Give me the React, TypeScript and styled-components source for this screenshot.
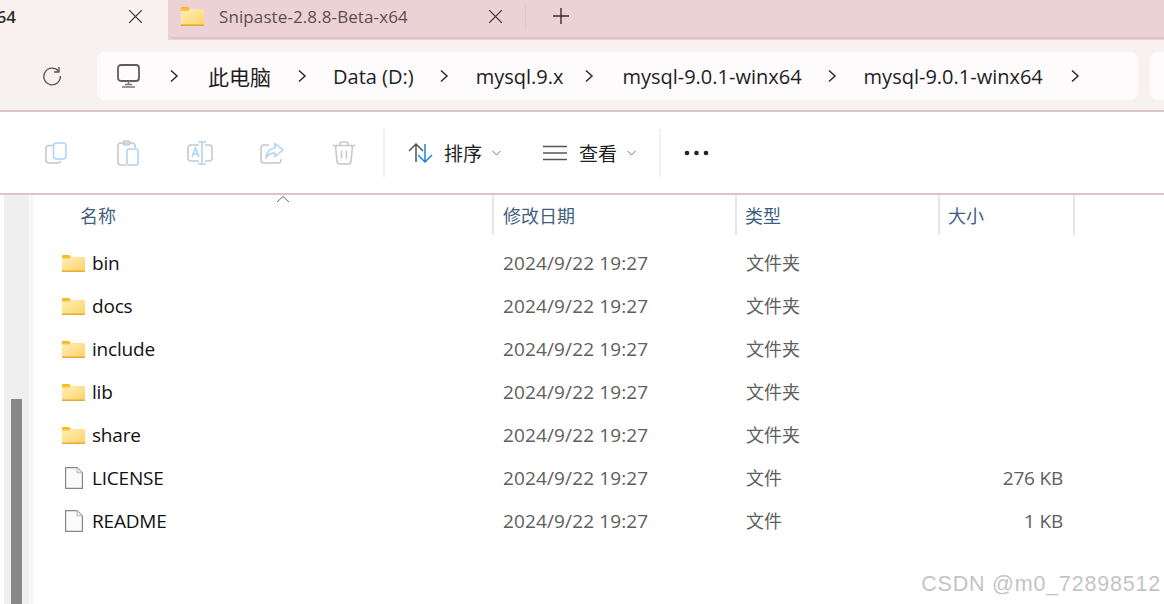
import React from "react";
import styled, { createGlobalStyle } from "styled-components";

const Global = createGlobalStyle`
  html, body { margin: 0; padding: 0; background: #fff; }
  #root { width: 1164px; height: 604px; overflow: hidden; }
`;
const FONT = `"Open Sans", "Noto Sans", "Noto Sans CJK SC", sans-serif`;

const Page = styled.div`
  position: relative; width: 1164px; height: 604px; overflow: hidden;
  display: flex; flex-direction: column; font-family: ${FONT}; color: #1c1c1c;
`;
const TabStrip = styled.div`
  display: flex; height: 40px; flex: none; background: #ecd2d4;
`;
const ActiveTab = styled.div`
  width: 168px; flex: none; background: #f9f2f1; display: flex; align-items: center;
  justify-content: space-between; padding: 0 25px 8px 0; box-sizing: border-box; overflow: hidden;
`;
const ClippedTitle = styled.span`
  font-size: 17px; font-weight: 600; width: 16px; overflow: hidden; direction: rtl; color: #2a2a2a;
`;
const IdleTab = styled.div`
  width: 357px; flex: none; height: 39px; box-sizing: border-box; background: #ecd2d4;
  border-bottom: 2px solid #dfc6c7; border-bottom-left-radius: 6px; display: flex; align-items: center;
  padding: 0 22px 5px 13px; gap: 15px;
`;
const TabTitle = styled.span`
  font-size: 17px; letter-spacing: 0.1px; color: #5b4e50; flex: 1; white-space: nowrap;
`;
const StripRest = styled.div`
  flex: 1; height: 39px; box-sizing: border-box; border-bottom: 2px solid #dfc6c7; display: flex; align-items: flex-start;
`;
const StripDivider = styled.div`
  width: 1px; height: 23px; margin-top: 5px; background: #e0c8ca; margin-right: 27px;
`;
const AddressRow = styled.div`
  height: 72px; flex: none; box-sizing: border-box; background: #f7f2f1; border-bottom: 2px solid #dcc6c4;
  display: flex; align-items: flex-start; padding: 12px 0 0 40px;
`;
const RefreshSlot = styled.div`
  width: 57px; height: 48px; flex: none; display: flex; align-items: center; padding-left: 2px; box-sizing: border-box;
`;
const AddressBox = styled.div`
  width: 1041px; height: 48px; flex: none; background: #fdfbfb; border-radius: 7px;
  display: flex; align-items: center; padding-left: 20px; box-sizing: border-box;
`;
const SearchBox = styled.div`
  width: 40px; height: 48px; margin-left: 12px; background: #fdfbfb; border-radius: 7px 0 0 7px; flex: none;
`;
const Crumb = styled.span<{ $cjk?: boolean }>`
  font-size: ${p => (p.$cjk ? 21 : 20)}px; color: #1e1e1e; white-space: nowrap;
`;
const ChevronSlot = styled.span<{ $l: number; $r: number }>`
  display: inline-flex; margin: 0 ${p => p.$r}px 0 ${p => p.$l}px; flex: none;
`;
const Toolbar = styled.div`
  height: 83px; flex: none; box-sizing: border-box; background: #fff; border-bottom: 2px solid #dcc6c4;
  display: flex; align-items: flex-start; padding: 17px 0 0 20px;
`;
const ToolIcon = styled.div`
  width: 72px; height: 48px; flex: none; display: flex; align-items: center; justify-content: center;
`;
const ToolDivider = styled.div<{ $l?: number }>`
  width: 2px; height: 48px; background: #f0f0f0; flex: none; margin-left: ${p => p.$l ?? 0}px;
`;
const ToolButton = styled.div<{ $w: number }>`
  width: ${p => p.$w}px; padding-left: 23px; box-sizing: border-box; height: 48px; flex: none;
  display: flex; align-items: center;
`;
const ToolLabel = styled.span<{ $l: number }>`
  font-size: 19px; color: #1e1e1e; margin: 0 10px 2px ${p => p.$l}px; white-space: nowrap; font-family: "Noto Sans CJK SC", sans-serif;
`;
const Body = styled.div`
  flex: 1; display: flex; min-height: 0;
`;
const Rail = styled.div`
  width: 25px; margin-left: 4px; flex: none; background: #efefef; position: relative; margin-right: 1px;
`;
const Thumb = styled.div`
  position: absolute; left: 7px; width: 11px; top: 204px; bottom: 0; background: #888;
`;
const RailEdge = styled.div`
  width: 3px; flex: none; background: #f6f6f6;
`;
const Main = styled.div`
  flex: 1; position: relative; background: #fff;
`;
const Grid = "461px 243px 203px 135px";
const HeaderRow = styled.div`
  display: grid; grid-template-columns: ${Grid}; height: 40px; position: relative;
`;
const HeadCell = styled.div<{ $pad: number }>`
  padding-left: ${p => p.$pad}px; box-sizing: border-box; display: flex; align-items: center;
  font-size: 18px; color: #3f5f80; border-right: 2px solid #e6e6e6; font-family: "Noto Sans CJK SC", sans-serif;
`;
const SortCaret = styled.svg`
  position: absolute; left: 243px; top: 0;
`;
const Rows = styled.div`
  padding-top: 6px;
`;
const Row = styled.div`
  display: grid; grid-template-columns: ${Grid}; height: 43px; align-items: center;
`;
const NameCell = styled.div`
  display: flex; align-items: center; padding-left: 29px; gap: 7px; font-size: 19px; letter-spacing: -0.2px; color: #111;
`;
const IconSlot = styled.span`
  width: 23px; height: 20px; flex: none; display: flex; align-items: center; justify-content: center;
`;
const DateCell = styled.div`
  padding-left: 9px; font-size: 19px; letter-spacing: 0.13px; color: #5e5e5e; white-space: nowrap;
`;
const TypeCell = styled.div`
  padding-left: 9px; font-size: 18px; color: #5e5e5e; margin-bottom: 2px; font-family: "Noto Sans CJK SC", sans-serif;
`;
const SizeCell = styled.div`
  padding-right: 12px; text-align: right; font-size: 19px; letter-spacing: -0.2px; color: #5e5e5e;
`;
const Watermark = styled.div`
  position: absolute; right: 3px; bottom: 7px; font-family: "Liberation Sans", sans-serif; font-size: 21.5px;
  color: #c4c4c4; white-space: nowrap; letter-spacing: 0.8px;
`;

const Folder = ({ h = 18 }: { h?: number }) => (
  <svg width={23} height={h} viewBox="0 0 23 18" preserveAspectRatio="none">
    <defs>
      <linearGradient id="fg" x1="0" y1="0" x2="1" y2="1">
        <stop offset="0" stopColor="#fff0b8" />
        <stop offset="1" stopColor="#fdd268" />
      </linearGradient>
    </defs>
    <path d="M0 2a1 1 0 0 1 1-1h6l2 2H0z" fill="#fbb81a" />
    <path d="M0 3h22a1 1 0 0 1 1 1v13H0z" fill="url(#fg)" />
    <path d="M0 3h9l-2 1.5H0z" fill="#fbc23a" />
    <rect x="0" y="16.5" width="23" height="1.5" fill="#e8ab35" />
  </svg>
);
const FileIcon = () => (
  <svg width="18" height="22" viewBox="0 0 18 22">
    <path d="M.6.6h11.5l5.3 5.3v15.5H.6z" fill="#fbfbfb" stroke="#858585" strokeWidth="1.2" />
    <path d="M12 .8v5h5" fill="#e8e8e8" stroke="#bcbcbc" />
  </svg>
);
const Chevron = () => (
  <svg width="10" height="14" viewBox="0 0 10 14">
    <path d="M2 1.5 8 7l-6 5.5" fill="none" stroke="#2c2c2c" strokeWidth="1.5" />
  </svg>
);
const Close = () => (
  <svg width="15" height="15" viewBox="0 0 15 15" style={{ flex: "none" }}>
    <path d="M1.2 1.2 13.8 13.8M13.8 1.2 1.2 13.8" stroke="#333" strokeWidth="1.2" />
  </svg>
);
const Plus = () => (
  <svg width="16" height="16" viewBox="0 0 16 16" style={{ marginTop: 8 }}>
    <path d="M8 0v16M0 8h16" stroke="#333" strokeWidth="1.4" />
  </svg>
);
const Refresh = () => (
  <svg width="20" height="20" viewBox="0 0 20 20">
    <path d="M16.5 5.2A8.3 8.3 0 1 0 18.4 10" fill="none" stroke="#555" strokeWidth="1.3" />
    <path d="M17 1v5h-5" fill="none" stroke="#555" strokeWidth="1.3" />
  </svg>
);
const Monitor = () => (
  <svg width="23" height="24" viewBox="0 0 23 24">
    <rect x="1" y="1" width="21" height="16" rx="3" fill="none" stroke="#5d5d5d" strokeWidth="1.8" />
    <path d="M8 20.5h7M5 23h13" stroke="#7a7a7a" strokeWidth="1.5" />
    <path d="M11.5 17v4" stroke="#7a7a7a" strokeWidth="1.5" />
  </svg>
);
const G = "#c8c8c8";
const B = "#abd5f6";
const CopyI = () => (
  <svg width="22" height="22" viewBox="0 0 22 22" fill="none" strokeWidth="1.6">
    <path d="M8 3.5H4a3 3 0 0 0-3 3V18a3 3 0 0 0 3 3h9a3.5 3.5 0 0 0 3-2" stroke={G} />
    <rect x="8.5" y="1" width="12.5" height="16" rx="3" stroke={B} />
  </svg>
);
const PasteI = () => (
  <svg width="22" height="26" viewBox="0 0 22 26" fill="none" strokeWidth="1.6">
    <path d="M9 25H4a3 3 0 0 1-3-3V6a3 3 0 0 1 3-3h11a3 3 0 0 1 3 3v2" stroke={G} />
    <rect x="6" y="1" width="7" height="4" rx="2" stroke={G} />
    <rect x="10" y="9" width="11" height="16" rx="2" stroke={B} />
  </svg>
);
const RenameI = () => (
  <svg width="26" height="24" viewBox="0 0 26 24" fill="none" strokeWidth="1.6">
    <path d="M12 4H4a3 3 0 0 0-3 3v10a3 3 0 0 0 3 3h8M18 4h4a3 3 0 0 1 3 3v10a3 3 0 0 1-3 3h-4" stroke={G} />
    <path d="M11 1h8M15 1v22M11 23h8" stroke={B} />
    <path d="M5 16l3.5-9 3.5 9M6.2 13h4.6" stroke={B} />
  </svg>
);
const ShareI = () => (
  <svg width="24" height="22" viewBox="0 0 24 22" fill="none" strokeWidth="1.6">
    <path d="M9 3H4a3 3 0 0 0-3 3v12a3 3 0 0 0 3 3h14a3 3 0 0 0 3-3v-1" stroke={G} />
    <path d="M15 1.5 23 8l-8 6.5V11c-4 0-7 1-9 5 .5-6 4-9.500 9-10z" stroke={B} strokeLinejoin="round" />
  </svg>
);
const TrashI = () => (
  <svg width="22" height="24" viewBox="0 0 22 24" fill="none" strokeWidth="1.6" stroke={G}>
    <path d="M0 4.500h22M7 4.500V3a2 2 0 0 1 2-2h4a2 2 0 0 1 2 2v1.500" />
    <path d="M2.500 4.500 4 20.500A3 3 0 0 0 7 23h8a3 3 0 0 0 3-2.500l1.500-16" />
    <path d="M8.500 9.500v8M13.500 9.500v8" />
  </svg>
);
const SortI = () => (
  <svg width="25" height="20" viewBox="0 0 25 20" fill="none" strokeWidth="1.5">
    <path d="M8 19V1M1 8l7-7 7 7" stroke="#555" />
    <path d="M17 1v18M10 12l7 7 7-7" stroke="#1a86dc" />
  </svg>
);
const ViewI = () => (
  <svg width="24" height="16" viewBox="0 0 24 16" stroke="#555" strokeWidth="1.5">
    <path d="M0 1.500h24M0 8h24M0 14.500h24" />
  </svg>
);
const Caret = () => (
  <svg width="9" height="6" viewBox="0 0 9 6" fill="none">
    <path d="M.5.8 4.500 5 8.500.8" stroke="#777" />
  </svg>
);
const Dots = () => (
  <svg width="25" height="6" viewBox="0 0 25 6" fill="#222">
    <circle cx="3" cy="3" r="2.300" /><circle cx="12.500" cy="3" r="2.300" /><circle cx="22" cy="3" r="2.300" />
  </svg>
);

const crumbs: [string, number, number, boolean][] = [
  ["此电脑", 26, 26, true],
  ["Data (D:)", 25, 27, false],
  ["mysql.9.x", 21, 28, false],
  ["mysql-9.0.1-winx64", 25, 27, false],
  ["mysql-9.0.1-winx64", 27, 0, false],
];
const rows = [
  { name: "bin", folder: true },
  { name: "docs", folder: true },
  { name: "include", folder: true },
  { name: "lib", folder: true },
  { name: "share", folder: true },
  { name: "LICENSE", size: "276 KB" },
  { name: "README", size: "1 KB" },
];

export default function App() {
  return (
    <Page>
      <Global />
      <TabStrip>
        <ActiveTab>
          <ClippedTitle>64</ClippedTitle>
          <Close />
        </ActiveTab>
        <IdleTab>
          <Folder h={20} />
          <TabTitle>Snipaste-2.8.8-Beta-x64</TabTitle>
          <Close />
        </IdleTab>
        <StripRest>
          <StripDivider />
          <Plus />
        </StripRest>
      </TabStrip>
      <AddressRow>
        <RefreshSlot><Refresh /></RefreshSlot>
        <AddressBox>
          <Monitor />
          <ChevronSlot $l={29} $r={29}><Chevron /></ChevronSlot>
          {crumbs.map(([t, l, r, cjk], i) => (
            <React.Fragment key={i}>
              <Crumb $cjk={cjk}>{t}</Crumb>
              <ChevronSlot $l={l} $r={r}><Chevron /></ChevronSlot>
            </React.Fragment>
          ))}
        </AddressBox>
        <SearchBox />
      </AddressRow>
      <Toolbar>
        <ToolIcon><CopyI /></ToolIcon>
        <ToolIcon><PasteI /></ToolIcon>
        <ToolIcon><RenameI /></ToolIcon>
        <ToolIcon><ShareI /></ToolIcon>
        <ToolIcon><TrashI /></ToolIcon>
        <ToolDivider $l={3} />
        <ToolButton $w={135}><SortI /><ToolLabel $l={11}>排序</ToolLabel><Caret /></ToolButton>
        <ToolButton $w={139}><ViewI /><ToolLabel $l={12}>查看</ToolLabel><Caret /></ToolButton>
        <ToolDivider />
        <ToolButton $w={60}><Dots /></ToolButton>
      </Toolbar>
      <Body>
        <Rail><Thumb /></Rail>
        <RailEdge />
        <Main>
          <HeaderRow>
            <HeadCell $pad={47}>名称</HeadCell>
            <HeadCell $pad={9}>修改日期</HeadCell>
            <HeadCell $pad={8}>类型</HeadCell>
            <HeadCell $pad={8}>大小</HeadCell>
            <SortCaret width="14" height="8" viewBox="0 0 14 8">
              <path d="M1 7 7 1.500 13 7" fill="none" stroke="#666" />
            </SortCaret>
          </HeaderRow>
          <Rows>
            {rows.map(r => (
              <Row key={r.name}>
                <NameCell>
                  <IconSlot>{r.folder ? <Folder /> : <FileIcon />}</IconSlot>
                  {r.name}
                </NameCell>
                <DateCell>2024/9/22 19:27</DateCell>
                <TypeCell>{r.folder ? "文件夹" : "文件"}</TypeCell>
                <SizeCell>{r.size ?? ""}</SizeCell>
              </Row>
            ))}
          </Rows>
        </Main>
      </Body>
      <Watermark>CSDN @m0_72898512</Watermark>
    </Page>
  );
}
